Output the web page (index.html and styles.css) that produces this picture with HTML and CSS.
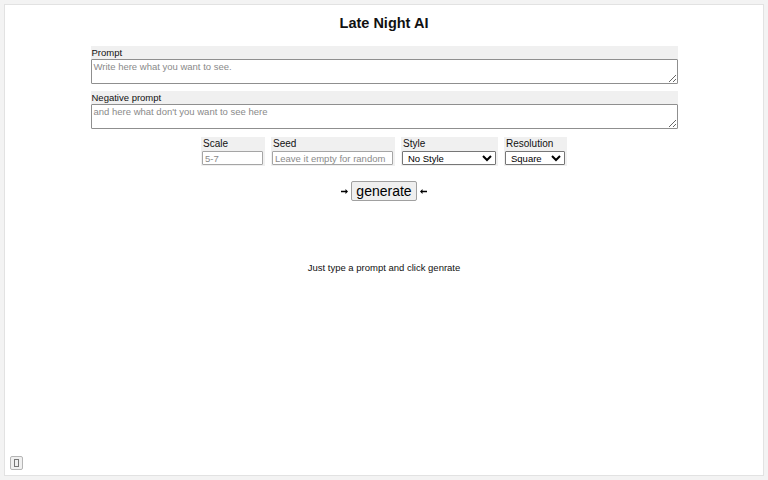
FILE: index.html
```html
<!DOCTYPE html>
<html lang="en">

<head>
    <meta charset="UTF-8">
    <meta name="viewport" content="width=device-width, initial-scale=1.0">
    <title>Late Night AI</title>
    <link rel="stylesheet" href="styles.css">
</head>

<body>
    <div class="container">
        <h1>Late Night AI</h1>

        <div class="form">
            <div class="field">
                <label for="prompt">Prompt</label>
                <textarea id="prompt" placeholder="Write here what you want to see."></textarea>
            </div>

            <div class="field">
                <label for="negative">Negative prompt</label>
                <textarea id="negative" placeholder="and here what don't you want to see here"></textarea>
            </div>
        </div>

        <div class="options">
            <div class="option">
                <label for="scale">Scale</label>
                <input id="scale" class="scale" type="text" placeholder="5-7">
            </div>
            <div class="option">
                <label for="seed">Seed</label>
                <input id="seed" class="seed" type="text" placeholder="Leave it empty for random">
            </div>
            <div class="option">
                <label for="style">Style</label>
                <select id="style" class="style">
                    <option>No Style</option>
                    <option>Anime</option>
                    <option>Photo</option>
                </select>
            </div>
            <div class="option">
                <label for="resolution">Resolution</label>
                <select id="resolution" class="resolution">
                    <option>Square</option>
                    <option>Portrait</option>
                    <option>Landscape</option>
                </select>
            </div>
        </div>

        <div class="actions">
            <svg class="arrow" width="7" height="5" viewBox="0 0 7 5"><path d="M0 1.8h4.5V0L7 2.5 4.5 5V3.2H0z" fill="#000"/></svg>
            <button class="generate">generate</button>
            <svg class="arrow" width="7" height="5" viewBox="0 0 7 5"><path d="M7 1.8H2.5V0L0 2.5 2.5 5V3.2H7z" fill="#000"/></svg>
        </div>

        <p class="status">Just type a prompt and click genrate</p>
    </div>

    <button class="toggle" aria-label="toggle"><span></span></button>
</body>

</html>
```

FILE: styles.css
```css
:root {
    --bg: #f3f3f3;
    --panel: #f0f0f0;
    --border: #e2e2e2;
    --text: #111;
    --placeholder: #8a8a8a;
    --font: 'Liberation Sans', Arial, sans-serif;
}

html, body {
    height: 100%;
}

body {
    margin: 0;
    padding: 4px;
    box-sizing: border-box;
    background-color: var(--bg);
    font-family: var(--font);
    color: var(--text);
}

.container {
    height: 100%;
    box-sizing: border-box;
    background-color: #fff;
    border: 1px solid var(--border);
    padding-top: 9px;
}

h1 {
    margin: 0 0 14px;
    font-size: 14.5px;
    line-height: 18px;
    text-align: center;
}

.form {
    width: 587px;
    margin: 0 auto;
}

.field {
    background-color: var(--panel);
    margin-bottom: 7px;
}

.field label {
    display: block;
    font-size: 9.5px;
    line-height: 13px;
    padding-left: 1px;
}

textarea {
    display: block;
    width: 100%;
    height: 25px;
    box-sizing: border-box;
    margin: 0;
    padding: 1px 2px;
    font-family: var(--font);
    font-size: 9.5px;
    border: 1px solid #8f8f8f;
    border-radius: 1px;
    resize: vertical;
}

::placeholder {
    color: var(--placeholder);
}

.options {
    display: flex;
    justify-content: center;
    gap: 6px;
    padding-top: 1px;
}

.option {
    background-color: var(--panel);
    padding: 0 2px 1px 1px;
}

.option label {
    display: block;
    font-size: 10px;
    line-height: 14px;
    padding-left: 1px;
}

input,
select {
    display: block;
    box-sizing: border-box;
    height: 14px;
    margin: 0;
    padding: 0 2px;
    font-family: var(--font);
    font-size: 9.5px;
    border: 1px solid #a5a5a5;
    border-radius: 1px;
    background-color: #fff;
}

select {
    padding: 0 1px;
    border-color: #767676;
    color: #000;
}

.scale {
    width: 61px;
}

.seed {
    width: 121px;
}

.style {
    width: 94px;
}

.resolution {
    width: 60px;
}

.actions {
    display: flex;
    justify-content: center;
    align-items: center;
    gap: 3px;
    margin-top: 15px;
}

.generate {
    height: 20px;
    padding: 0 4px;
    font-family: var(--font);
    font-size: 14px;
    line-height: 18px;
    color: #000;
    background-color: #efefef;
    border: 1px solid #a0a0a0;
    border-radius: 2px;
}

.status {
    margin: 60px 0 0;
    font-size: 9.5px;
    line-height: 13px;
    text-align: center;
}

.toggle {
    position: fixed;
    left: 10px;
    bottom: 10px;
    width: 13px;
    height: 14px;
    padding: 0;
    background-color: #f0f0f0;
    border: 1px solid #b5b5b5;
    border-radius: 2px;
    display: flex;
    align-items: center;
    justify-content: center;
}

.toggle span {
    display: block;
    width: 3px;
    height: 6px;
    border: 1px solid #777;
}
```
